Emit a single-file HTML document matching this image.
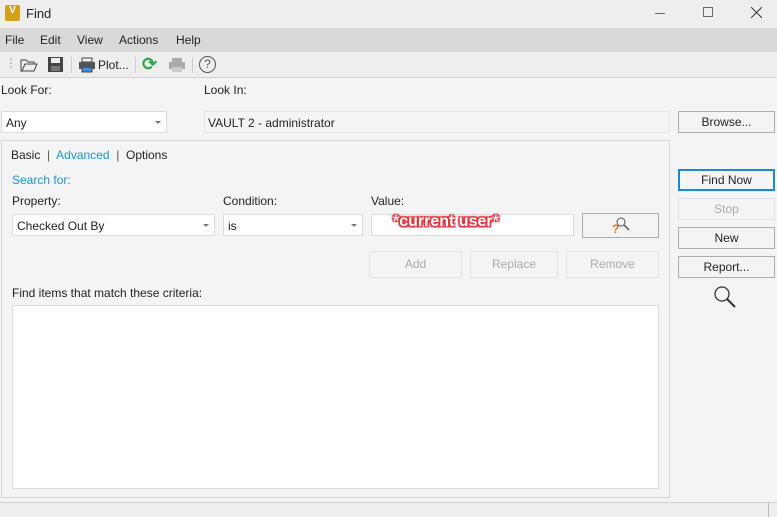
<!DOCTYPE html>
<html><head><style>
*{margin:0;padding:0;box-sizing:border-box}
body{width:777px;height:517px;position:relative;overflow:hidden;background:#f4f4f4;font-family:"Liberation Sans",sans-serif;font-size:12px;color:#222}
.a{position:absolute}
.box{position:absolute;background:#fff;border:1px solid #dcdcdc}
.dd::after{content:"";position:absolute;right:5px;top:50%;margin-top:-1px;border-left:3px solid transparent;border-right:3px solid transparent;border-top:3px solid #777}
.btn{position:absolute;border:1px solid #adadad;background:#f4f4f4;text-align:center;line-height:20px}
.dis{border-color:#e2e2e2;color:#aaa}
.t{position:absolute;white-space:nowrap}
</style></head><body>
<div class="a" style="left:0;top:0;width:777px;height:28px;background:#eeeeee"></div>
<div class="a" style="left:5px;top:5px;width:15px;height:16px;background:#d4a017;border-radius:2px;color:#fff;font-size:10px;font-weight:bold;text-align:center;line-height:12px">V</div>
<div class="t" style="left:26px;top:6px;font-size:13px">Find</div>
<div class="a" style="left:655px;top:13px;width:10px;height:1px;background:#666"></div>
<div class="a" style="left:703px;top:7px;width:10px;height:10px;border:1px solid #666"></div>
<svg class="a" style="left:751px;top:7px" width="11" height="11"><path d="M0 0L11 11M11 0L0 11" stroke="#333" stroke-width="1"/></svg>
<div class="a" style="left:0;top:28px;width:777px;height:24px;background:#d9d9d9"></div>
<div class="t" style="left:5px;top:33px">File</div>
<div class="t" style="left:40px;top:33px">Edit</div>
<div class="t" style="left:77px;top:33px">View</div>
<div class="t" style="left:119px;top:33px">Actions</div>
<div class="t" style="left:176px;top:33px">Help</div>
<div class="a" style="left:0;top:52px;width:777px;height:26px;background:#eeeeee;border-bottom:1px solid #d0d0d0"></div>
<div class="t" style="left:5px;top:56px;color:#999">⋮</div>
<svg class="a" style="left:20px;top:57px" width="18" height="16"><path d="M1 3h5l2 2h6v2H5L2 14H1z M5 7h12l-3 7H2z" fill="none" stroke="#444"/></svg>
<svg class="a" style="left:47px;top:56px" width="17" height="17"><rect x="1" y="1" width="15" height="15" fill="#444"/><rect x="4" y="2" width="9" height="5" fill="#eee"/><rect x="4" y="10" width="9" height="5" fill="#777"/></svg>
<div class="a" style="left:71px;top:57px;width:1px;height:16px;background:#ccc"></div>
<svg class="a" style="left:78px;top:57px" width="18" height="16"><rect x="4" y="1" width="10" height="4" fill="none" stroke="#444"/><rect x="1" y="5" width="16" height="7" fill="#555"/><rect x="4" y="10" width="10" height="5" fill="#3b8ee0" stroke="#444"/></svg>
<div class="t" style="left:98px;top:58px">Plot...</div>
<div class="a" style="left:135px;top:57px;width:1px;height:16px;background:#ccc"></div>
<div class="t" style="left:142px;top:54px;font-size:18px;color:#2ea84a;font-weight:bold">⟳</div>
<svg class="a" style="left:168px;top:57px" width="18" height="16"><rect x="4" y="1" width="10" height="4" fill="#aaa"/><rect x="1" y="5" width="16" height="7" fill="#aaa"/><rect x="4" y="10" width="10" height="5" fill="#ccc"/></svg>
<div class="a" style="left:192px;top:57px;width:1px;height:16px;background:#ccc"></div>
<div class="a" style="left:199px;top:56px;width:17px;height:17px;border:1.5px solid #555;border-radius:50%;text-align:center;font-size:12px;line-height:14px;color:#555">?</div>

<div class="t" style="left:1px;top:83px">Look For:</div>
<div class="t" style="left:204px;top:83px">Look In:</div>
<div class="box dd" style="left:1px;top:111px;width:166px;height:22px"><span class="t" style="left:4px;top:4px">Any</span></div>
<div class="a" style="left:204px;top:111px;width:466px;height:22px;border:1px solid #e4e4e4;background:#f4f4f4"><span class="t" style="left:3px;top:4px">VAULT 2 - administrator</span></div>
<div class="btn" style="left:678px;top:111px;width:97px;height:22px">Browse...</div>

<div class="a" style="left:1px;top:140px;width:669px;height:358px;border:1px solid #d6d6d6"></div>
<div class="t" style="left:11px;top:148px">Basic&nbsp; <span style="color:#555">|</span>&nbsp; <span style="color:#1a96d8">Advanced</span>&nbsp; <span style="color:#555">|</span>&nbsp; Options</div>
<div class="t" style="left:12px;top:173px;color:#1a96d8">Search for:</div>
<div class="t" style="left:12px;top:194px">Property:</div>
<div class="t" style="left:223px;top:194px">Condition:</div>
<div class="t" style="left:371px;top:194px">Value:</div>
<div class="box dd" style="left:12px;top:214px;width:203px;height:22px"><span class="t" style="left:4px;top:4px">Checked Out By</span></div>
<div class="box dd" style="left:223px;top:214px;width:140px;height:22px"><span class="t" style="left:4px;top:4px">is</span></div>
<div class="box" style="left:371px;top:214px;width:203px;height:22px"></div>
<div class="t" style="left:393px;top:213px;font-size:16px;font-weight:bold;color:#fff;text-shadow:0 0 2px #e2333d,0 0 2px #e2333d,1.5px 1.5px 1px #e2333d,-1.5px -1.5px 1px #e2333d,1.5px -1.5px 1px #e2333d,-1.5px 1.5px 1px #e2333d">*current user*</div>
<div class="btn" style="left:582px;top:213px;width:77px;height:25px"><span style="color:#e07020;font-weight:bold;position:absolute;left:29px;top:5px">?</span><svg class="a" style="left:33px;top:3px" width="14" height="14"><circle cx="5" cy="5" r="4" fill="none" stroke="#555"/><path d="M8 8l5 5" stroke="#555" stroke-width="1.5"/></svg></div>
<div class="btn dis" style="left:369px;top:251px;width:93px;height:27px;line-height:25px">Add</div>
<div class="btn dis" style="left:470px;top:251px;width:88px;height:27px;line-height:25px">Replace</div>
<div class="btn dis" style="left:566px;top:251px;width:93px;height:27px;line-height:25px">Remove</div>
<div class="t" style="left:12px;top:286px">Find items that match these criteria:</div>
<div class="box" style="left:12px;top:305px;width:647px;height:184px"></div>

<div class="btn" style="left:678px;top:169px;width:97px;height:22px;border:2px solid #1a8ad4;line-height:18px">Find Now</div>
<div class="btn dis" style="left:678px;top:198px;width:97px;height:22px">Stop</div>
<div class="btn" style="left:678px;top:227px;width:97px;height:22px">New</div>
<div class="btn" style="left:678px;top:256px;width:97px;height:22px">Report...</div>
<svg class="a" style="left:713px;top:285px" width="24" height="24"><circle cx="9" cy="9" r="7" fill="none" stroke="#333" stroke-width="1.3"/><path d="M14 14l8 8" stroke="#333" stroke-width="2"/></svg>

<div class="a" style="left:0;top:502px;width:777px;height:15px;background:#eeeeee;border-top:1px solid #d0d0d0"></div>
<div class="a" style="left:768px;top:503px;width:1px;height:14px;background:#bbb"></div>
</body></html>
